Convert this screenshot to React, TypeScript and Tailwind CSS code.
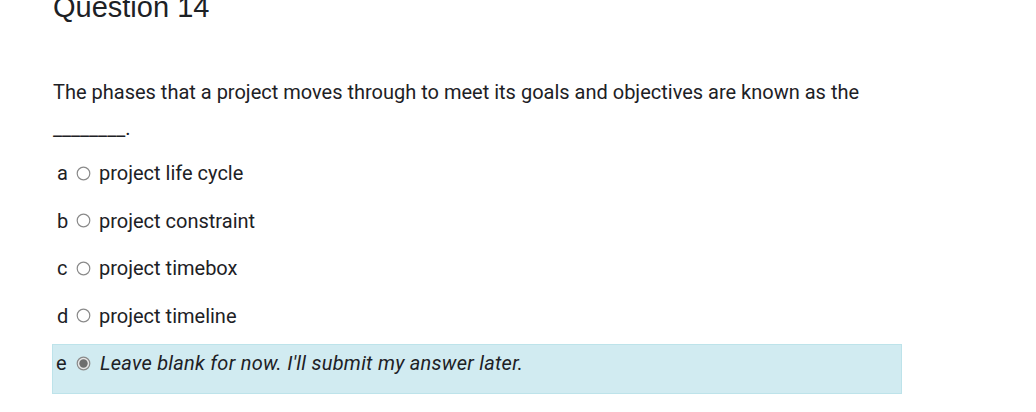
import React from "react";

const options = [
  { l: "a", t: "project life cycle" },
  { l: "b", t: "project constraint" },
  { l: "c", t: "project timebox" },
  { l: "d", t: "project timeline" },
];

function Radio({ checked }: { checked?: boolean }) {
  return (
    <svg width="15" height="15" viewBox="0 0 15 15" className="shrink-0">
      <circle cx="7.5" cy="7.5" r="6.3" fill={checked ? "#e6e6e6" : "#ffffff"} stroke="#8a8a8a" strokeWidth="1.2" />
      {checked && <circle cx="7.5" cy="7.5" r="4.2" fill="#6e6e6e" />}
    </svg>
  );
}

export default function App() {
  return (
    <div className="w-[1036px] h-[412px] bg-white overflow-hidden text-[#1d2125]">
      <div className="ml-[52px] w-[850px]">
        <div
          className="mt-[-10px] pl-[1px] text-[29px] leading-[34px] text-[#1d2125]"
          style={{ fontFamily: '"Liberation Sans", Arial, sans-serif' }}
        >
          Question 14
        </div>
        <div style={{ fontFamily: 'Roboto, "Noto Sans", sans-serif' }}>
          <div className="mt-[50px] pl-[1px] text-[20px] leading-[36px] w-[850px]">
            The phases that a project moves through to meet its goals and objectives are known as the ________.
          </div>
          <div className="mt-[8px]">
            {options.map((o) => (
              <div
                key={o.l}
                className="flex items-center border border-transparent pl-[4px] pt-[5px] pb-[14.5px] text-[20px] leading-[26px]"
              >
                <span className="w-[19px]">{o.l}</span>
                <Radio />
                <span className="ml-[8px]">{o.t}</span>
              </div>
            ))}
            <div className="flex items-center border border-[#bde3ea] bg-[#d1ebf1] pl-[3px] pt-[5px] pb-[17px] text-[20px] leading-[26px]">
              <span className="w-[20px]">e</span>
              <Radio checked />
              <span className="ml-[9px] italic tracking-[0.26px]">Leave blank for now. I'll submit my answer later.</span>
            </div>
          </div>
        </div>
      </div>
    </div>
  );
}
